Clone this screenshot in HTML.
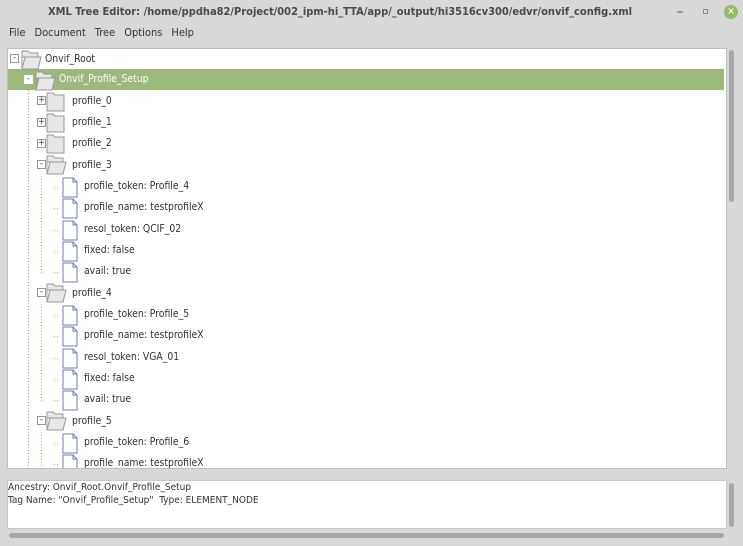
<!DOCTYPE html>
<html><head><style>
*{margin:0;padding:0;box-sizing:border-box}
body{width:743px;height:546px;background:#d8d8d8;font-family:"DejaVu Sans Condensed","DejaVu Sans","Liberation Sans",sans-serif;font-size:10.3px;color:#333;position:relative;overflow:hidden}
.a{position:absolute}
.title{left:48px;top:0;height:24px;font-weight:bold;font-size:11px;line-height:24px;color:#4a4a4a;white-space:nowrap}
.menu span{margin-right:9px}
.tree{left:7px;top:48px;width:720px;height:421px;background:#fff;border:1px solid #bfbfbf;overflow:hidden}
.row{position:absolute;height:21px;line-height:21px;white-space:nowrap}
.sel{left:0;top:20px;width:716px;height:21px;background:#9cb97b}
.exp{position:absolute;width:9px;height:9px;border:1px solid #999;background:#fff;font-size:9px;line-height:6px;text-align:center;color:#444}
</style></head><body>
<div class="a title">XML Tree Editor: /home/ppdha82/Project/002_ipm-hi_TTA/app/_output/hi3516cv300/edvr/onvif_config.xml</div>
<div class="a" style="left:677px;top:11px;width:6px;height:2px;background:#999"></div>
<div class="a" style="left:703px;top:9px;width:5px;height:5px;border:1px solid #888"></div>
<div class="a" style="left:724px;top:5px;width:14px;height:14px;border-radius:7px;background:#8fbf5e;color:#fff;font-size:10px;line-height:14px;text-align:center;font-weight:bold">×</div>
<div class="a menu" style="left:9px;top:26px;font-size:11px;line-height:14px;color:#333"><span>File</span><span>Document</span><span>Tree</span><span>Options</span><span>Help</span></div>
<div class="a tree">
<div class="a sel"></div>
<svg class="a" style="left:0;top:0" width="720" height="421">
<defs>
<g id="fc"><path d="M1 2h6l2 2h9v16H1z" fill="#e6e6e6" stroke="#999" stroke-width="1"/></g>
<g id="fo"><path d="M1 2h6l2 2h8v4H1z M1 20 4 8h16l-3 12z" fill="#e8e8e8" stroke="#999" stroke-width="1"/><path d="M1 8v12" stroke="#999"/></g>
<g id="dc"><path d="M1 1h10l4 4v15H1z" fill="#fff" stroke="#6b7fb8" stroke-width="1"/><path d="M11 1v4h4" fill="none" stroke="#6b7fb8"/></g>
</defs>
<g stroke="#9cb97b" stroke-dasharray="1,2" fill="none">
<line x1="20.5" y1="41" x2="20.5" y2="421"/>
<line x1="33.5" y1="127" x2="33.5" y2="224"/>
<line x1="33.5" y1="255" x2="33.5" y2="352"/>
<line x1="33.5" y1="383" x2="33.5" y2="421"/>
<line x1="46" y1="138.5" x2="52" y2="138.5"/><line x1="46" y1="159.5" x2="52" y2="159.5"/><line x1="46" y1="181.5" x2="52" y2="181.5"/><line x1="46" y1="202.5" x2="52" y2="202.5"/><line x1="46" y1="223.5" x2="52" y2="223.5"/>
<line x1="46" y1="266.5" x2="52" y2="266.5"/><line x1="46" y1="287.5" x2="52" y2="287.5"/><line x1="46" y1="309.5" x2="52" y2="309.5"/><line x1="46" y1="330.5" x2="52" y2="330.5"/><line x1="46" y1="351.5" x2="52" y2="351.5"/>
<line x1="46" y1="394.5" x2="52" y2="394.5"/><line x1="46" y1="415.5" x2="52" y2="415.5"/>
</g>
<use href="#fo" x="13" y="0"/>
<use href="#fo" x="27" y="21"/>
<use href="#fc" x="38" y="42"/>
<use href="#fc" x="38" y="63"/>
<use href="#fc" x="38" y="84"/>
<use href="#fo" x="38" y="105"/>
<use href="#dc" x="54" y="128"/><use href="#dc" x="54" y="149"/><use href="#dc" x="54" y="171"/><use href="#dc" x="54" y="192"/><use href="#dc" x="54" y="213"/>
<use href="#fo" x="38" y="233"/>
<use href="#dc" x="54" y="256"/><use href="#dc" x="54" y="277"/><use href="#dc" x="54" y="299"/><use href="#dc" x="54" y="320"/><use href="#dc" x="54" y="341"/>
<use href="#fo" x="38" y="361"/>
<use href="#dc" x="54" y="384"/><use href="#dc" x="54" y="405"/>
</svg>
<div class="exp" style="left:2px;top:5px">-</div>
<div class="exp" style="left:16px;top:26px;border-color:#fff">-</div>
<div class="exp" style="left:29px;top:47px">+</div>
<div class="exp" style="left:29px;top:69px">+</div>
<div class="exp" style="left:29px;top:90px">+</div>
<div class="exp" style="left:29px;top:111px">-</div>
<div class="exp" style="left:29px;top:239px">-</div>
<div class="exp" style="left:29px;top:367px">-</div>
<div class="row" style="left:37px;top:0">Onvif_Root</div>
<div class="row" style="left:51px;top:20px;color:#fff">Onvif_Profile_Setup</div>
<div class="row" style="left:64px;top:42px">profile_0</div>
<div class="row" style="left:64px;top:63px">profile_1</div>
<div class="row" style="left:64px;top:84px">profile_2</div>
<div class="row" style="left:64px;top:106px">profile_3</div>
<div class="row" style="left:76px;top:127px">profile_token: Profile_4</div>
<div class="row" style="left:76px;top:148px">profile_name: testprofileX</div>
<div class="row" style="left:76px;top:170px">resol_token: QCIF_02</div>
<div class="row" style="left:76px;top:191px">fixed: false</div>
<div class="row" style="left:76px;top:212px">avail: true</div>
<div class="row" style="left:64px;top:234px">profile_4</div>
<div class="row" style="left:76px;top:255px">profile_token: Profile_5</div>
<div class="row" style="left:76px;top:276px">profile_name: testprofileX</div>
<div class="row" style="left:76px;top:298px">resol_token: VGA_01</div>
<div class="row" style="left:76px;top:319px">fixed: false</div>
<div class="row" style="left:76px;top:340px">avail: true</div>
<div class="row" style="left:64px;top:362px">profile_5</div>
<div class="row" style="left:76px;top:383px">profile_token: Profile_6</div>
<div class="row" style="left:76px;top:404px">profile_name: testprofileX</div>
</div>
<div class="a" style="left:729px;top:50px;width:5px;height:152px;background:#a8a8a8;border-radius:3px"></div>
<div class="a" style="left:7px;top:480px;width:720px;height:49px;background:#fff;border:1px solid #c8c8c8;font-size:10px;line-height:13px">
Ancestry: Onvif_Root.Onvif_Profile_Setup<br>Tag Name: "Onvif_Profile_Setup"&nbsp; Type: ELEMENT_NODE</div>
<div class="a" style="left:729px;top:483px;width:5px;height:44px;background:#a8a8a8;border-radius:3px"></div>
<div class="a" style="left:9px;top:533px;width:715px;height:5px;background:#a8a8a8;border-radius:3px"></div>
</body></html>
